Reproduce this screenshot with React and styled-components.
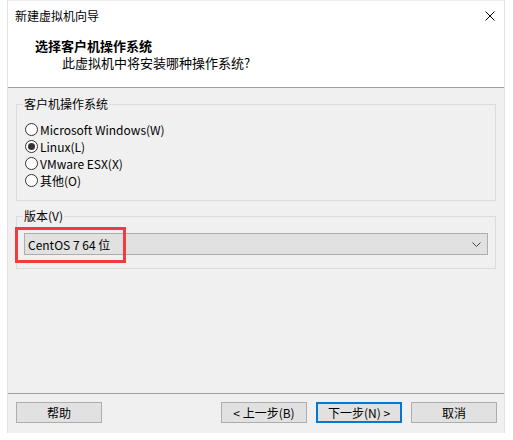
import React from "react";
import styled, { createGlobalStyle } from "styled-components";

const GlobalStyle = createGlobalStyle`
  html, body { margin: 0; padding: 0; background: #fff; }
  body {
    font-family: "Noto Sans CJK SC", "Microsoft YaHei", "Noto Sans", sans-serif;
    font-size: 12px;
    color: #000;
  }
  * { box-sizing: border-box; }
`;

const Window = styled.div`
  margin-left: 7px;
  width: 498px;
  height: 433px;
  display: flex;
  flex-direction: column;
  background: #f0f0f0;
  border-left: 1px solid #e2e2e2;
  border-right: 1px solid #e2e2e2;
  border-top: 1px solid #ededed;
`;

const TitleBar = styled.div`
  height: 29px;
  background: #fff;
  display: flex;
  align-items: center;
  justify-content: space-between;
  padding: 0 9px 0 7px;
  font-size: 12px;
  line-height: 16px;
`;

const Header = styled.div`
  height: 58px;
  background: #fff;
  border-bottom: 1px solid #a0a0a0;
  display: flex;
  flex-direction: column;
  padding-top: 7px;
`;

const HeaderTitle = styled.div`
  font-size: 13px;
  font-weight: bold;
  line-height: 17px;
  padding-left: 27px;
`;

const HeaderSub = styled.div`
  font-size: 13px;
  line-height: 17px;
  padding-left: 54px;
`;

const Body = styled.div`
  flex: 1;
  display: flex;
  flex-direction: column;
  padding: 8px 8px 0 8px;
`;

const Group = styled.fieldset`
  margin: ${(p) => (p.$first ? "0" : "7px 0 0 0")};
  padding: ${(p) => (p.$first ? "9px 7px 11px 7px" : "9px 7px 13px 7px")};
  border: 1px solid #dcdcdc;
  min-width: 0;
`;

const Legend = styled.legend`
  padding: 0 1px;
  margin-left: -1px;
  font-size: 12px;
  line-height: 16px;
`;

const RadioRow = styled.div`
  height: 17px;
  display: flex;
  align-items: center;
  gap: 2px;
  font-size: 12px;
  line-height: 17px;
`;

const RadioCircle = styled.span`
  width: 13px;
  height: 13px;
  margin-left: 1px;
  border-radius: 50%;
  border: 1px solid #333;
  background: #fff;
  display: flex;
  align-items: center;
  justify-content: center;
  flex: none;

  &::after {
    content: "";
    width: 7px;
    height: 7px;
    border-radius: 50%;
    background: ${(p) => (p.$checked ? "#333" : "transparent")};
  }
`;

const SelectWrap = styled.div`
  position: relative;
`;

const SelectBox = styled.div`
  height: 22px;
  background: #e1e1e1;
  border: 1px solid #adadad;
  display: flex;
  align-items: center;
  justify-content: space-between;
  padding: 0 6px 0 3px;
  font-size: 12px;
`;

const RedMark = styled.div`
  position: absolute;
  left: -9px;
  top: -6px;
  width: 111px;
  height: 36px;
  border: 3px solid #f03c3c;
  pointer-events: none;
`;

const Spacer = styled.div`
  flex: 1;
`;

const Footer = styled.div`
  border-top: 1px solid #a0a0a0;
  display: flex;
  align-items: center;
  gap: 9px;
  padding: 8px 7px 10px 8px;
`;

const Button = styled.button`
  width: 86px;
  height: 21px;
  margin: 0;
  padding: 0;
  background: #e1e1e1;
  border: ${(p) => (p.$primary ? "2px solid #0078d7" : "1px solid #adadad")};
  font-family: inherit;
  font-size: 12px;
  color: #000;
  line-height: 1;
  display: flex;
  align-items: center;
  justify-content: center;
`;

const Grow = styled.div`
  flex: 1;
`;

const CloseIcon = () => (
  <svg width="10" height="10" viewBox="0 0 10 10">
    <path d="M0.5 0.5 L9.5 9.5 M9.5 0.5 L0.5 9.5" stroke="#000" strokeWidth="1" fill="none" />
  </svg>
);

const Chevron = () => (
  <svg width="9" height="5" viewBox="0 0 9 5">
    <path d="M0.5 0.5 L4.5 4.5 L8.5 0.5" stroke="#444" strokeWidth="1" fill="none" />
  </svg>
);

const options = [
  { label: "Microsoft Windows(W)", checked: false },
  { label: "Linux(L)", checked: true },
  { label: "VMware ESX(X)", checked: false },
  { label: "其他(O)", checked: false },
];

export default function App() {
  return (
    <>
      <GlobalStyle />
      <Window>
        <TitleBar>
          <span>新建虚拟机向导</span>
          <CloseIcon />
        </TitleBar>
        <Header>
          <HeaderTitle>选择客户机操作系统</HeaderTitle>
          <HeaderSub>此虚拟机中将安装哪种操作系统?</HeaderSub>
        </Header>
        <Body>
          <Group $first>
            <Legend>客户机操作系统</Legend>
            {options.map((o) => (
              <RadioRow key={o.label}>
                <RadioCircle $checked={o.checked} />
                <span>{o.label}</span>
              </RadioRow>
            ))}
          </Group>
          <Group>
            <Legend>版本(V)</Legend>
            <SelectWrap>
              <SelectBox>
                <span>CentOS 7 64 位</span>
                <Chevron />
              </SelectBox>
              <RedMark />
            </SelectWrap>
          </Group>
          <Spacer />
        </Body>
        <Footer>
          <Button>帮助</Button>
          <Grow />
          <Button>&lt; 上一步(B)</Button>
          <Button $primary>下一步(N) &gt;</Button>
          <Button>取消</Button>
        </Footer>
      </Window>
    </>
  );
}
